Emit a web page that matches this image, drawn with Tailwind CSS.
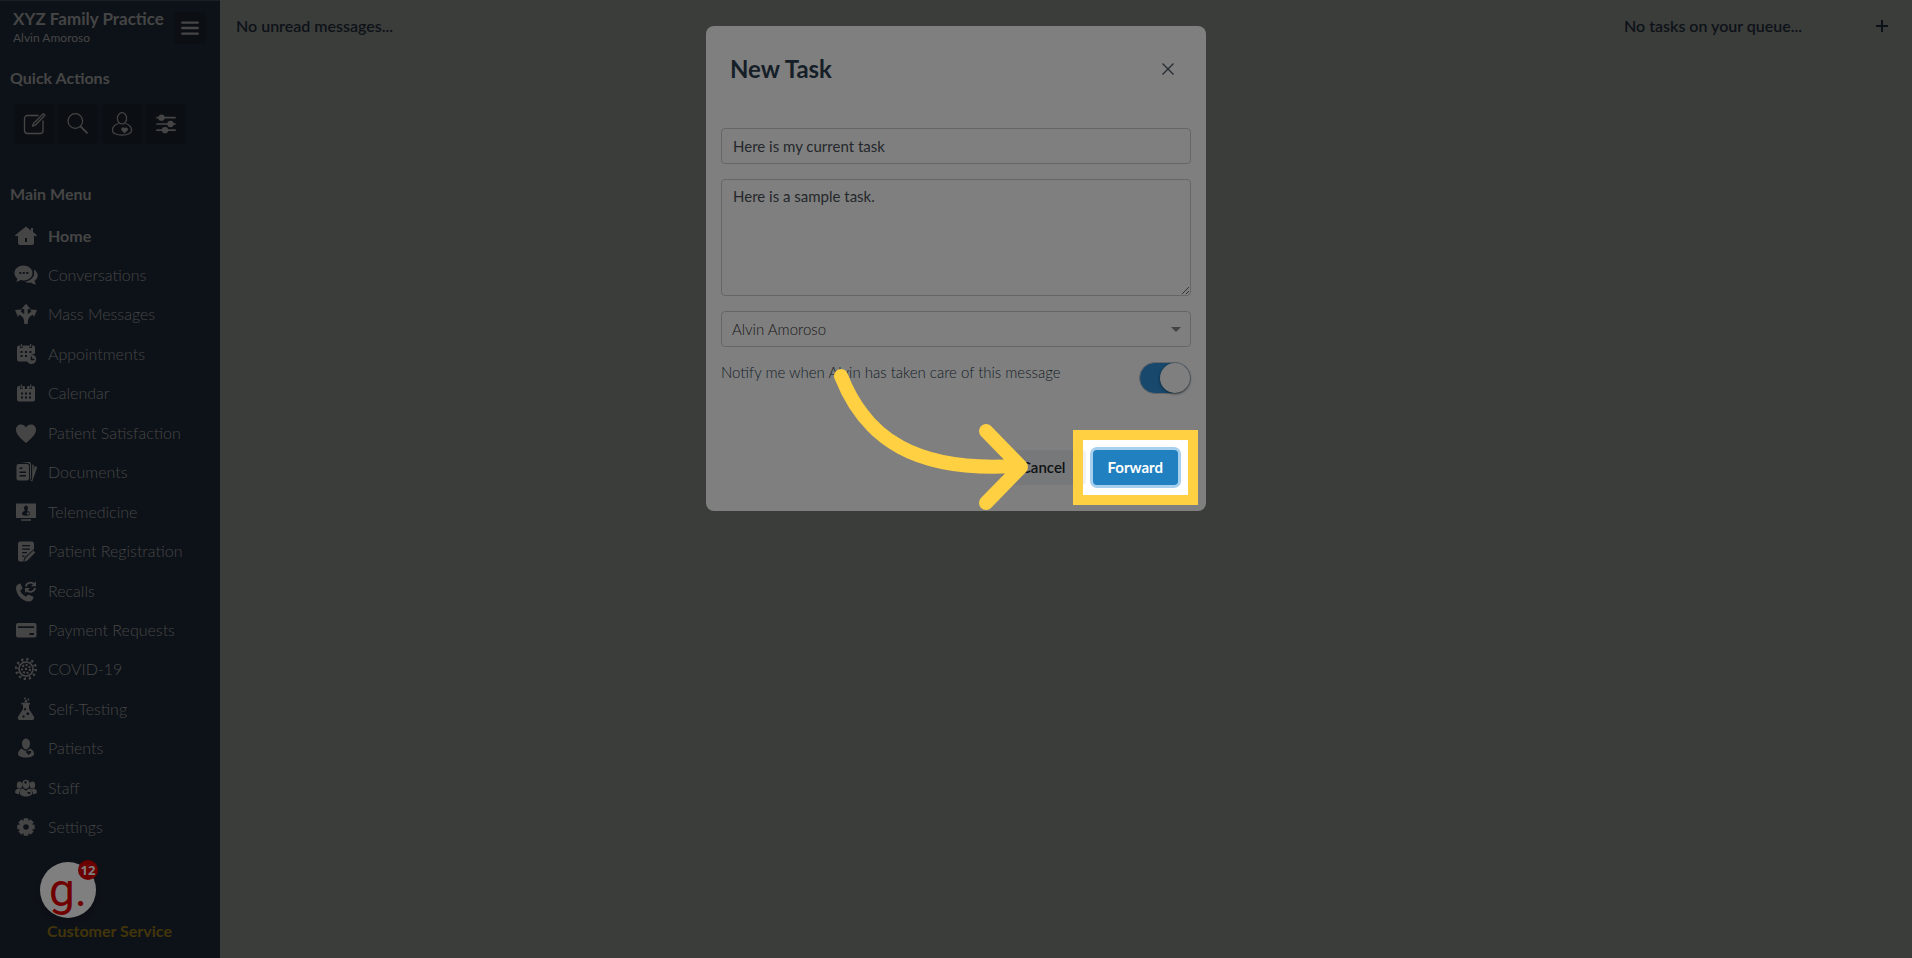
<!DOCTYPE html>
<html lang="en">
<head>
    <meta charset="UTF-8">
    <meta name="viewport" content="width=device-width, initial-scale=1.0">
    <title>XYZ Family Practice</title>
    <script src="https://cdn.jsdelivr.net/npm/@tailwindcss/browser@4"></script>
</head>
<body class="font-[Lato,'Liberation_Sans',sans-serif] text-base bg-[#767a77] overflow-x-hidden">
<div class="flex min-h-screen">

    <!-- Sidebar -->
    <aside class="w-[220px] shrink-0 bg-[#1b2430] border-t border-[#363c46] text-[#8a8a8a] flex flex-col">
        <div class="flex items-start justify-between pl-[13px] pr-3.5 pt-[7px]">
            <div>
                <h1 class="text-[17px] leading-[22px] font-bold">XYZ Family Practice</h1>
                <p class="text-xs leading-4">Alvin Amoroso</p>
            </div>
            <button type="button" aria-label="Toggle menu" class="mt-1 size-8 shrink-0 rounded bg-[#171f26] flex items-center justify-center">
                <svg class="size-[18px]" viewBox="0 0 18 18" stroke="currentColor" stroke-width="2.4" stroke-linecap="round"><path d="M1.2 3.6h15.6M1.2 9h15.6M1.2 14.6h15.6"/></svg>
            </button>
        </div>

        <h2 class="pl-2.5 mt-5 font-bold leading-6">Quick Actions</h2>
        <div class="flex gap-1 pl-3.5 mt-3.5">
            <button type="button" aria-label="New message" class="size-10 rounded bg-[#171f26] flex items-center justify-center">
                <svg class="size-6" viewBox="0 0 24 24" fill="none" stroke="currentColor" stroke-width="1.3" stroke-linecap="round" stroke-linejoin="round"><path d="M16 3.500H5.500a3 3 0 0 0-3 3v12a3 3 0 0 0 3 3h12.500a3 3 0 0 0 3-3V9"/><path d="M10.500 14.200l1-2.700L21.300 1.700l1.700 1.500L13.200 13.200z"/></svg>
            </button>
            <button type="button" aria-label="Search" class="size-10 rounded bg-[#171f26] flex items-center justify-center">
                <svg class="size-6" viewBox="0 0 24 24" fill="none" stroke="currentColor" stroke-width="1.2" stroke-linecap="round"><circle cx="9.300" cy="9" r="7.300"/><path d="M14.500 14.300l6.500 6.500" stroke-width="1.700"/></svg>
            </button>
            <button type="button" aria-label="Find patient" class="size-10 rounded bg-[#171f26] flex items-center justify-center">
                <svg class="size-6" viewBox="0 0 24 24" fill="none" stroke="currentColor" stroke-width="1.200"><ellipse cx="12" cy="6.300" rx="4.600" ry="5.700"/><path d="M8.500 11.500C4.500 12.600 2.400 15 2.400 18.500c0 2.600 4 4.600 9.600 4.600s9.600-2 9.600-4.600c0-3.500-2.100-5.900-6.100-7"/><path fill="currentColor" d="M14.500 20.500l-2.300-2.300c-.9-1.200.1-2.400 1.200-2.200.5.1.9.400 1.100.8.200-.4.700-.7 1.200-.8 1.200-.1 2.200 1.100 1.200 2.300z"/></svg>
            </button>
            <button type="button" aria-label="Filters" class="size-10 rounded bg-[#171f26] flex items-center justify-center">
                <svg class="size-6" viewBox="0 0 24 24" fill="currentColor" stroke="currentColor" stroke-width="1.700" stroke-linecap="round"><path d="M3 5.700h18M3 12h18M3 18.200h18"/><circle cx="7.500" cy="5.700" r="2.300"/><circle cx="16.500" cy="12" r="2.300"/><circle cx="11" cy="18.200" r="2.300"/></svg>
            </button>
        </div>

        <h2 class="pl-2.5 mt-[38px] font-bold leading-6">Main Menu</h2>
        <nav class="mt-2.5 flex-1 flex flex-col justify-between font-light text-[#8a8a8a]">
            <a href="#" class="h-[39px] pl-3.5 flex items-center gap-2.5 font-bold">
                <svg class="size-6" viewBox="0 0 24 24" fill="currentColor"><path fill-rule="evenodd" d="M12 2.500l5 3.900V4h2v4l4 3.200-1 1.300-2-1V19a2 2 0 0 1-2 2H6a2 2 0 0 1-2-2v-7.500l-2 1-1-1.300zM11 14v4h2v-4z"/></svg>
                Home
            </a>
            <a href="#" class="h-[39px] pl-3.5 flex items-center gap-2.5">
                <svg class="size-6" viewBox="0 0 24 24" fill="currentColor"><path fill-rule="evenodd" d="M9.500 2.500c5 0 9 3.300 9 7.500s-4 7.500-9 7.500c-1 0-2-.1-3-.4-1.200 1-2.700 1.700-4.300 1.700.7-.9 1.100-2 1.200-3.100C1.600 14.300.5 12.300.5 10c0-4.200 4-7.500 9-7.500zM5.300 9v2h2V9zm3.500 0v2h2V9zm3.500 0v2h2V9z"/><path d="M19.500 6.500c2.600 1.200 4.200 3.300 4.200 5.900 0 2.200-1.200 4-3.100 5.200.1 1.500.6 2.700 1.400 3.800-1.900 0-3.300-.7-4.400-1.700-2.500.3-5-.1-6.900-1.200 5.400-.4 9.500-4 9.500-8.500 0-1.200-.2-2.400-.7-3.500z"/></svg>
                Conversations
            </a>
            <a href="#" class="h-[39px] pl-3.5 flex items-center gap-2.5">
                <svg class="size-6" viewBox="0 0 24 24" fill="none" stroke="currentColor" stroke-width="3.500"><path d="M12 22V5M12 21c0-6-2-8-7.500-10.500M12 21c0-6 2-8 7.500-10.500"/><path fill="currentColor" stroke="none" d="M12 1.800l4.500 5.200h-9zM1 8l7-.5-4 7.500zM23 8l-7-.5 4 7.500z"/></svg>
                Mass Messages
            </a>
            <a href="#" class="h-[39px] pl-3.5 flex items-center gap-2.5">
                <svg class="size-6" viewBox="0 0 24 24" fill="currentColor"><path fill-rule="evenodd" d="M5 3.500h1V6h2.500V3.500h7V6H18V3.500h1a2 2 0 0 1 2 2V12a6 6 0 0 0-7 7.500H5a2 2 0 0 1-2-2v-12a2 2 0 0 1 2-2zM6.500 9v2h2V9zm4.500 0v2h2V9zm4.500 0v2h2V9zm-9 4v2h2v-2zm4.500 0v2h2v-2z"/><path d="M6.700 2h1.200v3H6.700zM16 2h1.200v3H16z"/><path fill-rule="evenodd" d="M17.500 12.500a4.800 4.800 0 1 1 0 9.600 4.800 4.800 0 0 1 0-9.600zm-.8 2v3.700h3.800v-1.400h-2.400v-2.300z"/></svg>
                Appointments
            </a>
            <a href="#" class="h-[39px] pl-3.5 flex items-center gap-2.5">
                <svg class="size-6" viewBox="0 0 24 24" fill="currentColor"><path fill-rule="evenodd" d="M5 5h1v3h2.500V5h2.300v3h2.400V5h2.300v3H18V5h1a2 2 0 0 1 2 2v11.500a2 2 0 0 1-2 2H5a2 2 0 0 1-2-2V7a2 2 0 0 1 2-2zM7 11.500v2h2v-2zm4 0v2h2v-2zm4 0v2h2v-2zm-8 4v2h2v-2zm4 0v2h2v-2zm4 0v2h2v-2z"/><path d="M6.700 3.500h1.200v3.700H6.700zM16.100 3.500h1.200v3.700h-1.200z"/></svg>
                Calendar
            </a>
            <a href="#" class="h-[39px] pl-3.5 flex items-center gap-2.5">
                <svg class="size-6" viewBox="0 0 24 24" fill="currentColor"><path d="M12 22C7 17.500 2 13.500 2 8.700 2 5.500 4.300 3.500 7 3.500c2.200 0 4 1.200 5 3 1-1.800 2.800-3 5-3 2.700 0 5 2 5 5.200 0 4.800-5 8.800-10 13.300z"/></svg>
                Patient Satisfaction
            </a>
            <a href="#" class="h-[39px] pl-3.5 flex items-center gap-2.5">
                <svg class="size-6" viewBox="0 0 24 24" fill="currentColor"><path fill-rule="evenodd" d="M4.500 4H13a2 2 0 0 1 2 2v12.500a2 2 0 0 1-2 2H4.500a2 2 0 0 1-2-2V6a2 2 0 0 1 2-2zM5.500 7.500V9h3V7.500zm0 4V13h6.500v-1.500zm0 3.500v1.500h6.500V15z"/><path d="M7 2h8.500a2 2 0 0 1 1.500 2v15.500l-1-.5V4.500L14.500 3z"/><path d="M18.200 4.500l1.500.5v8l-1.500 5zM20.800 6l2.400 1-5 14.500-2-1 1.500-.500z"/></svg>
                Documents
            </a>
            <a href="#" class="h-[39px] pl-3.5 flex items-center gap-2.5">
                <svg class="size-6" viewBox="0 0 24 24" fill="currentColor"><path fill-rule="evenodd" d="M2 3.500h20V18H2zM12 5.500a2 2.500 0 0 0-1.300 4.400l.2.900c-1.900.6-2.900 1.700-2.900 3.200 0 1 1.700 1.700 4 1.700s4-.7 4-1.700c0-1.500-1-2.600-2.900-3.200l.2-.9A2 2.500 0 0 0 12 5.500z"/><path d="M7 19.200h10v1.500H7zM12.500 13h1v-1h1v1h1v1h-1v1h-1v-1h-1z"/></svg>
                Telemedicine
            </a>
            <a href="#" class="h-[39px] pl-3.5 flex items-center gap-2.5">
                <svg class="size-6" viewBox="0 0 24 24" fill="currentColor"><path fill-rule="evenodd" d="M6 2.500h12a2 2 0 0 1 2 2V10l-10 9-.5 3.500H6a2 2 0 0 1-2-2v-16a2 2 0 0 1 2-2zM8 6v1.300h8V6zm0 3.500v1.300h8V9.500zM8 13v1.300h5V13zm0 3.500v1.300h2.500v-1.300z"/><path d="M19.300 11.500l2 2-8.200 8.300-2.800.9.700-2.900z"/></svg>
                Patient Registration
            </a>
            <a href="#" class="h-[39px] pl-3.5 flex items-center gap-2.5">
                <svg class="size-6" viewBox="0 0 24 24" fill="currentColor"><path d="M6.500 4.500l2 5-2.400 2c1 2.700 3.200 5 5.900 6.200l2.200-2.300 5.300 2.300c-.2 3-2 4.800-4.500 4.800C8.500 22.500 2 15.500 2 9c0-2.300 1.700-4.300 4.500-4.500z"/><path fill="none" stroke="currentColor" stroke-width="1.700" d="M11.800 7.500c.6-3.400 5.500-5.500 9-1.800M21.200 9c-.6 3.400-5.500 5.500-9 1.800"/><path d="M22 2.200v5h-5zM11 14V9h5z"/></svg>
                Recalls
            </a>
            <a href="#" class="h-[39px] pl-3.5 flex items-center gap-2.5">
                <svg class="size-6" viewBox="0 0 24 24" fill="currentColor"><path fill-rule="evenodd" d="M4 5h16.500a2 2 0 0 1 2 2v10.500a2 2 0 0 1-2 2H4a2 2 0 0 1-2-2V7a2 2 0 0 1 2-2zM4 8.300V10h16V8.300zm11.500 6.700v2H20v-2z"/></svg>
                Payment Requests
            </a>
            <a href="#" class="h-[39px] pl-3.5 flex items-center gap-2.5">
                <svg class="size-6" viewBox="0 0 24 24" fill="none" stroke="currentColor"><circle cx="12" cy="12" r="7" stroke-width="1.600"/><circle cx="12" cy="12" r="10" stroke-width="2.200" stroke-dasharray="2.236 3"/><circle cx="12" cy="12" r="8.500" stroke-width="1.500" stroke-dasharray="1 3.450"/><circle cx="12" cy="12" r="4" stroke-width="2" stroke-dasharray="2 1.590"/><circle cx="12" cy="12" r="1.200" fill="currentColor" stroke="none"/></svg>
                COVID-19
            </a>
            <a href="#" class="h-[39px] pl-3.5 flex items-center gap-2.5">
                <svg class="size-6" viewBox="0 0 24 24" fill="currentColor"><path fill-rule="evenodd" d="M7.500 5.700H16v1.800h-1V12l4.800 7.500c1 1.800.3 3.500-1.800 3.500H6c-2.100 0-2.800-1.700-1.800-3.500L9 12V7.500H7.500zM11 11a1.200 1.200 0 1 0 .1 0zm2.800 4.300a1.400 1.400 0 1 0 .1 0zm-4.300 3a1.200 1.200 0 1 0 .1 0z"/><circle cx="11" cy="1.500" r="1"/><circle cx="14.300" cy="2.500" r="1"/><circle cx="12" cy="4.300" r="1.300"/></svg>
                Self-Testing
            </a>
            <a href="#" class="h-[39px] pl-3.5 flex items-center gap-2.5">
                <svg class="size-6" viewBox="0 0 24 24" fill="currentColor"><path d="M12 2.500c2.400 0 4 2.200 4 5s-1.600 5.800-4 5.800-4-3-4-5.800 1.600-5 4-5z"/><path fill-rule="evenodd" d="M8 12.500c1 1.400 2.400 2.200 4 2.200s3-.8 4-2.200c2.600 1 4 3 4 5.500 0 2-3.300 3.500-8 3.500S4 20 4 18c0-2.500 1.400-4.500 4-5.500zm6.700 6.500l2.300-2.300c.9-1.200-.1-2.300-1.200-2-.5.100-.9.400-1.100.8-.2-.4-.6-.7-1.100-.8-1.100-.3-2.100.8-1.200 2z"/></svg>
                Patients
            </a>
            <a href="#" class="h-[39px] pl-3.5 flex items-center gap-2.5">
                <svg class="size-6" viewBox="0 0 24 24" fill="currentColor"><ellipse cx="5.500" cy="9" rx="2.700" ry="3.500"/><ellipse cx="18.500" cy="9" rx="2.700" ry="3.500"/><path d="M4 12.500c1.200 1 2.300 1 3.500 0l.7.600C6 14.500 5 16 5 18.200 2.500 18 1 17.400 1 16.500c0-2 1-3.300 3-4zM20 12.500c-1.200 1-2.300 1-3.500 0l-.7.600c2.200 1.400 3.200 2.900 3.200 5.100 2.500-.2 4-.8 4-1.700 0-2-1-3.300-3-4z"/><path fill-rule="evenodd" d="M12 3.700c2.200 0 3.800 1.500 3.800 3.800 0 2.700-1.600 5.300-3.800 5.300s-3.800-2.600-3.800-5.300c0-2.300 1.600-3.800 3.800-3.800zM10 5.500v1.200h1V8h1V6.700h1V5.500z"/><path fill-rule="evenodd" d="M9 12.500l3 2.200 3-2.200c2.300 1 3.300 2.700 3.300 4.500s-2.500 3.500-6.300 3.500S5.700 18.800 5.700 17 6.700 13.500 9 12.500zm4.500 3.500v1.200l1.500 1 1.500-1V16z"/></svg>
                Staff
            </a>
            <a href="#" class="h-[39px] pl-3.5 flex items-center gap-2.5">
                <svg class="size-6" viewBox="0 0 24 24" fill="none" stroke="currentColor"><circle cx="12" cy="12" r="4.900" stroke-width="4.200"/><path stroke-width="4.600" stroke-linecap="butt" d="M12 3.300v3M12 17.700v3M3.300 12h3M17.700 12h3M5.850 5.850l2.100 2.100M16.050 16.050l2.100 2.100M18.150 5.850l-2.100 2.100M7.950 16.050l-2.100 2.100"/></svg>
                Settings
            </a>
        </nav>

        <!-- Customer service -->
        <div class="pt-[15px] pl-10 pb-[15px]">
            <button type="button" aria-label="Support, 12 new" class="relative block size-14 rounded-full bg-white shadow-md">
                <span class="flex h-10 items-center justify-center font-[Roboto,sans-serif] text-[46px] leading-10 text-[#e00000]">g.</span>
                <span class="absolute -top-0.5 -right-0.5 size-5 rounded-full bg-[#d80000] text-white font-['Open_Sans',sans-serif] text-[13px] leading-5 font-bold text-center">12</span>
            </button>
            <a href="#" class="block mt-px pl-[7px] leading-6 font-bold text-[#866a14]">Customer Service</a>
        </div>
    </aside>

    <!-- Page -->
    <main class="flex-1 flex items-start justify-between pt-3.5 pl-4 pr-6 text-[#1b2430] font-semibold">
        <p class="leading-6">No unread messages...</p>
        <div class="flex items-center justify-between w-[264px]">
            <p class="leading-6">No tasks on your queue...</p>
            <button type="button" aria-label="Add task">
                <svg class="size-3" viewBox="0 0 12 12" stroke="currentColor" stroke-width="2"><path d="M6 0v12M0 6h12"/></svg>
            </button>
        </div>
    </main>
</div>

<!-- New task dialog -->
<div class="fixed inset-0 z-10 flex items-start justify-center pt-[26px]">
    <form role="dialog" aria-labelledby="dialog-title" class="w-[500px] rounded-lg bg-white px-[15px] pb-[26px]">
        <div class="flex items-center justify-between h-[86px] pl-[9px] pr-[17px]">
            <h2 id="dialog-title" class="text-2xl font-bold text-[#2c3e50]">New Task</h2>
            <button type="button" aria-label="Close">
                <svg class="size-3" viewBox="0 0 12 12" stroke="#4b5563" stroke-width="1.300"><path d="M.5.500l11 11M11.500.500l-11 11"/></svg>
            </button>
        </div>
        <div class="mt-4 flex flex-col gap-[15px]">
            <input type="text" aria-label="Subject" value="Here is my current task" class="h-9 w-full rounded border border-[#c8ccd0] px-[11px] text-[15px] text-[#495057]">
            <textarea aria-label="Details" class="block h-[117px] w-full rounded border border-[#c8ccd0] px-[11px] py-1.5 text-[15px] leading-5 text-[#495057]">Here is a sample task.</textarea>
            <div class="relative">
                <select aria-label="Assign to" class="block h-9 w-full appearance-none rounded border border-[#c8ccd0] pl-2.5 pr-8 text-[15px] font-light text-[#333]">
                    <option>Alvin Amoroso</option>
                </select>
                <svg class="pointer-events-none absolute right-2.5 top-4 h-[5px] w-2.5" viewBox="0 0 10 5" fill="#888"><path d="M0 0h10L5 5z"/></svg>
            </div>
            <label class="flex items-start justify-between text-[15px] leading-5 font-light text-[#2c3e50]">
                Notify me when Alvin has taken care of this message
                <input type="checkbox" checked class="relative h-8 w-[52px] appearance-none rounded-full border border-[#c8ccd0] bg-[#3498db] checked:bg-[#3090d6] before:absolute before:right-0 before:top-0 before:size-[30px] before:rounded-full before:bg-white before:shadow-[0_1px_3px_rgba(0,0,0,0.5)]">
            </label>
        </div>
        <div class="mt-14 flex justify-end gap-[7px] pr-[13px]">
            <button type="button" class="h-[35px] rounded bg-[#eff1f4] px-5 text-[15px] font-semibold text-[#212529]">Cancel</button>
            <div class="relative">
                <button type="submit" class="block h-[35px] rounded bg-[#2180c0] px-[15px] text-[15px] font-bold text-white ring-3 ring-[#a6d0ee]">Forward</button>
                <!-- Highlight, its shadow dims the rest of the page -->
                <div class="pointer-events-none absolute -inset-5 border-10 border-[#ffd042] shadow-[0_0_0_3000px_rgba(0,0,0,0.5)]"></div>
                <svg class="pointer-events-none absolute right-full -bottom-[26px] mr-[62px] h-36 w-[200px]" viewBox="0 0 200 144" fill="none" stroke="#ffd042" stroke-width="14" stroke-linecap="round" stroke-linejoin="round"><path d="M10 9C35 73 86 105 184 99M155 64l35 36-35 36"/></svg>
            </div>
        </div>
    </form>
</div>
</body>
</html>
